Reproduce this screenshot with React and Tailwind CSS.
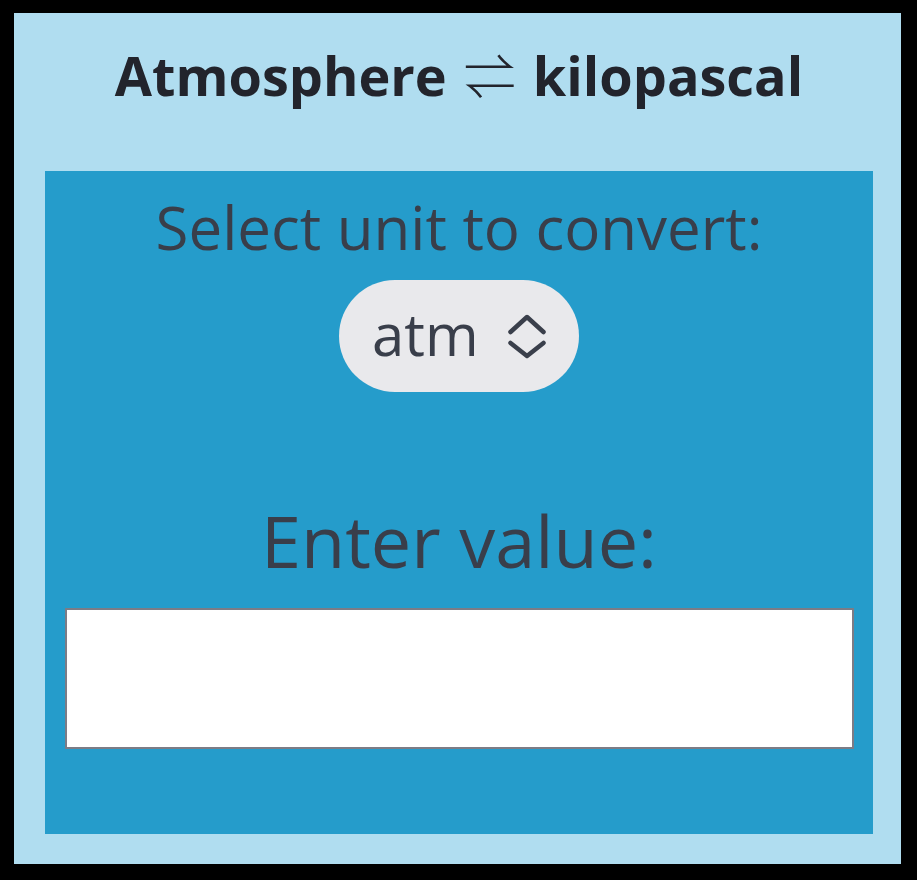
import { useState } from 'react'

const ChevronsUpDown = () => (
  <svg width="44" height="48" viewBox="0 0 44 48" fill="none" className="shrink-0">
    <path d="M5.5 20 L22 5 L38.5 20" stroke="#3a3f4b" strokeWidth="4.5" strokeLinecap="round" strokeLinejoin="round" />
    <path d="M5.5 31 L22 44 L38.5 31" stroke="#3a3f4b" strokeWidth="4.5" strokeLinecap="round" strokeLinejoin="round" />
  </svg>
)

export default function App() {
  const [unit, setUnit] = useState('atm')
  const [value, setValue] = useState('')

  return (
    <div
      className="w-[917px] h-[880px] bg-black pt-[13px] pl-[14px] pr-[16px] pb-[16px]"
      style={{ fontFamily: '"Open Sans", "DejaVu Sans", sans-serif' }}
    >
      <div className="h-full bg-[#b0ddf0] pl-[31px] pr-[28px] pb-[30px] flex flex-col">
        <h1 className="h-[100px] pt-[25px] text-center text-[54px] leading-[75px] font-bold text-[#22242c]">
          Atmosphere{' '}
          <span className="mx-[3px] text-[52px] leading-none font-light font-['Noto_Sans_CJK_JP',sans-serif]">⇌</span>{' '}
          kilopascal
        </h1>

        {/* converter panel */}
        <div className="mt-[58px] flex-1 bg-[#259ccb] flex flex-col items-center">
          <p className="pt-[15px] text-[60px] leading-[82px] text-[#393e4a]">Select unit to convert:</p>

          <label className="mt-[12px] h-[112px] w-[240px] rounded-full bg-[#e9e9ec] flex items-center pl-[33px] pr-[30px] gap-[26px] relative">
            <span className="text-[58px] leading-none text-[#393e4a] pb-[4px]">{unit}</span>
            <ChevronsUpDown />
            <select
              value={unit}
              onChange={(e) => setUnit(e.target.value)}
              className="absolute inset-0 opacity-0 cursor-pointer"
            >
              <option value="atm">atm</option>
              <option value="kPa">kPa</option>
            </select>
          </label>

          <p className="mt-[99px] text-[72px] leading-[98px] text-[#393e4a]">Enter value:</p>

          <input
            type="text"
            value={value}
            onChange={(e) => setValue(e.target.value)}
            className="mt-[19px] w-[789px] h-[141px] bg-white border-2 border-[#7c7c86] outline-none px-4 text-[48px] text-[#393e4a]"
          />
        </div>
      </div>
    </div>
  )
}
